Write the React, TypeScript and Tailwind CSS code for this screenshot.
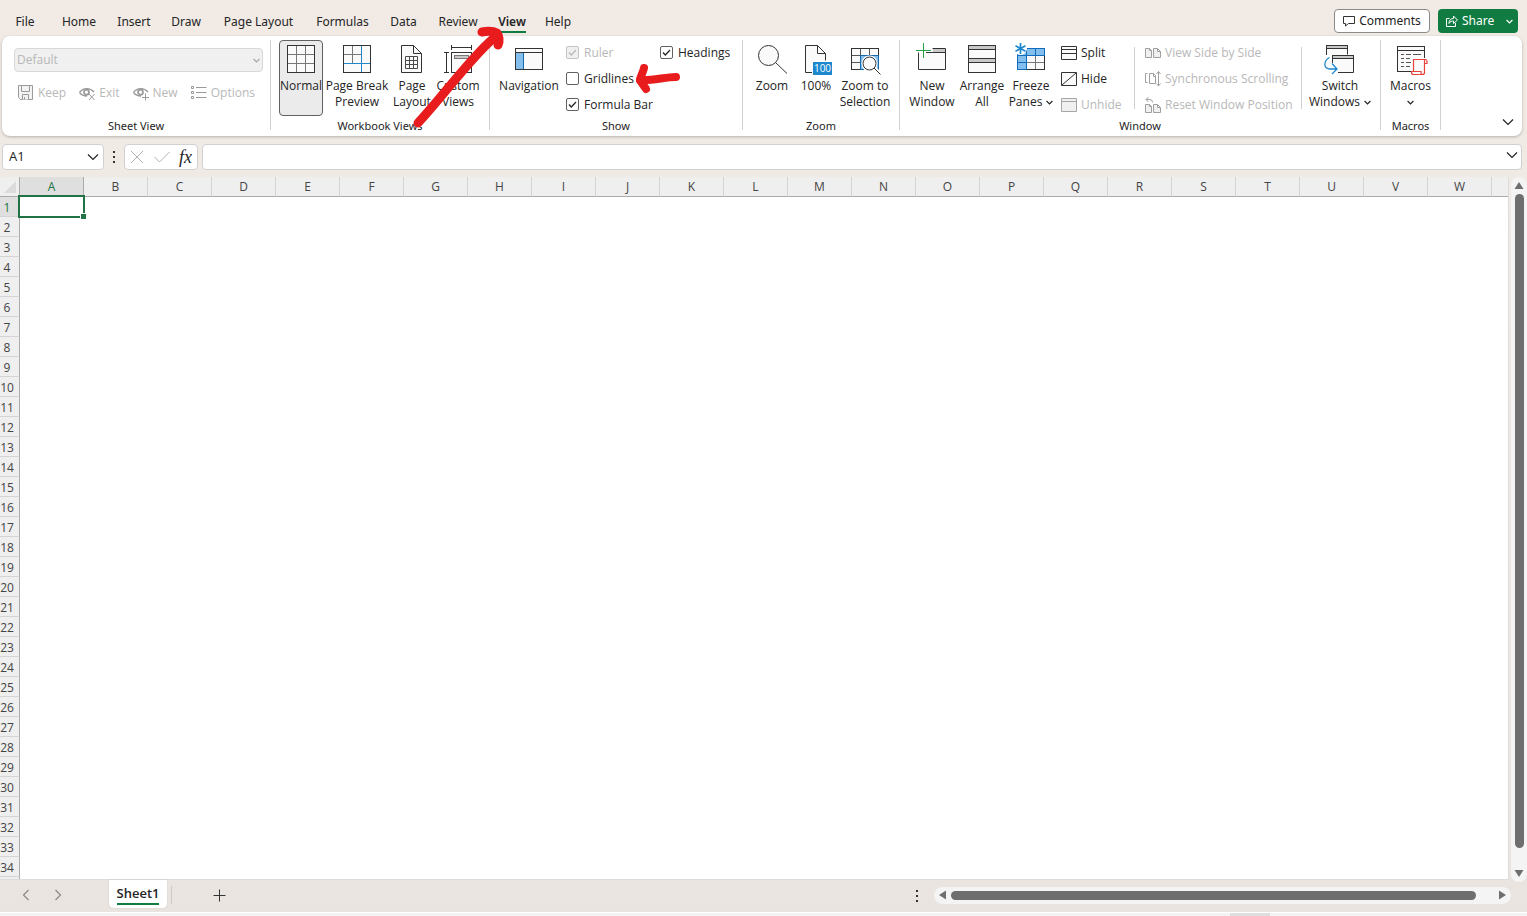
import React from "react";

type IconProps = { children: React.ReactNode; size?: number };

function Svg({ children, size = 32 }: IconProps) {
  return (
    <svg
      aria-hidden="true"
      className="block shrink-0 overflow-visible"
      width={size}
      height={size}
      viewBox={`0 0 ${size} ${size}`}
      fill="none"
      stroke="#333333"
    >
      {children}
    </svg>
  );
}

function Chevron({ width = 7, stroke = 1.2 }: { width?: number; stroke?: number }) {
  return (
    <svg
      aria-hidden="true"
      className="inline-block shrink-0"
      width={width}
      height={width}
      viewBox="0 0 12 12"
      fill="none"
      stroke="currentColor"
      strokeWidth={(stroke * 12) / width}
    >
      <path d="M1 3.5 6 8.5l5-5" />
    </svg>
  );
}

const NormalIcon = (
  <Svg>
    <rect x="2.5" y="2.5" width="27" height="27" fill="#fafafa" />
    <path d="M11.5 3v26M20.5 3v26M3 11.5h26M3 20.5h26" stroke="#777" />
    <rect x="2.5" y="2.5" width="27" height="27" />
  </Svg>
);
const PageBreakIcon = (
  <Svg>
    <rect x="2.5" y="2.5" width="27" height="27" fill="#fafafa" />
    <path d="M11.5 3v17M3 11.5h17" stroke="#777" />
    <path d="M20.5 3v26M3 20.5h26" stroke="#1f86c9" />
  </Svg>
);
const PageLayoutIcon = (
  <Svg>
    <path d="M5.5 2.5h12l8 8v19h-20z" fill="#fafafa" />
    <path d="M17.5 2.5v8h8" />
    <path d="M9.5 13.5h12v12h-12zM13.5 13.5v12M17.5 13.5v12M9.5 17.5h12M9.5 21.5h12" stroke="#4a4a4a" />
  </Svg>
);
const CustomViewsIcon = (
  <Svg>
    <rect x="9.5" y="9.5" width="20" height="20" fill="#fafafa" />
    <path d="M9.5 4.5h20M9.5 2v5M29.5 2v5M4.5 9.5v20M2 9.5h5M2 29.5h5" />
    <rect x="12.5" y="12.5" width="14" height="3" fill="#c8c8c8" stroke="#777" />
  </Svg>
);
const NavigationIcon = (
  <Svg>
    <rect x="2.5" y="5.5" width="27" height="21" fill="#fafafa" />
    <rect x="3" y="10" width="8" height="16" fill="#83beec" stroke="none" />
    <path d="M10.5 10v16" stroke="#1769aa" />
    <path d="M2.5 9.5h27M2.5 5.5h27v21h-27z" />
  </Svg>
);
const ZoomIcon = (
  <Svg>
    <circle cx="12.5" cy="12.5" r="10" fill="#fafafa" />
    <path d="m19.5 19.5 11.5 11" />
  </Svg>
);
const HundredIcon = (
  <Svg>
    <path d="M5.5 2.5h12l8 8v19h-20z" fill="#fafafa" stroke="none" />
    <path d="M12 29.5H5.5v-27h12l8 8v7M17.5 2.5v8h8" />
    <rect x="13" y="19" width="19" height="13" fill="#1e88cf" stroke="none" />
    <text x="22.5" y="29" textAnchor="middle" fontSize="10" fill="#fff" stroke="none">
      100
    </text>
  </Svg>
);
const ZoomSelectionIcon = (
  <Svg>
    <rect x="2.5" y="5.5" width="27" height="21" fill="#fafafa" />
    <path d="M11.5 5.5v21M20.5 5.5v7M2.5 12.5h9M2.5 19.5h9" stroke="#555" />
    <path d="M29.5 12.5v-7h-27v21h9" />
    <path d="M11.5 12.5h18v14h-18z" fill="#83beec" stroke="#1769aa" />
    <circle cx="20.5" cy="20.5" r="8" fill="#fff" stroke="none" />
    <path d="m25 25 7 7" stroke="#fff" strokeWidth="4" />
    <circle cx="20.5" cy="20.5" r="6.5" fill="#fafafa" />
    <path d="m25 25 6.5 6.5" />
  </Svg>
);
const NewWindowIcon = (
  <Svg>
    <rect x="3" y="10" width="26" height="16" fill="#fafafa" stroke="none" />
    <rect x="17" y="6" width="12" height="3" fill="#c8c8c8" stroke="none" />
    <path d="M2.5 9.5v17h27v-21H16.5M10 9.5h19.5" />
    <path d="M7.5 0v15M0 7.5h15" stroke="#fff" strokeWidth="3" />
    <path d="M7.5 0v15M0 7.5h15" stroke="#26a148" />
  </Svg>
);
const ArrangeIcon = (
  <Svg>
    <rect x="2.5" y="2.5" width="27" height="27" fill="#fafafa" />
    <rect x="2.5" y="2.5" width="27" height="4" fill="#c8c8c8" />
    <rect x="2.5" y="15.5" width="27" height="4" fill="#c8c8c8" />
  </Svg>
);
const FreezeIcon = (
  <Svg>
    <rect x="2.5" y="5.5" width="27" height="21" fill="#fafafa" />
    <path d="M20.5 12.5v14M12 19.5h17.5" stroke="#777" />
    <path d="M29.5 12.5v14h-18" />
    <path d="M2.5 5.5h27v7h-18v14h-9z" fill="#83beec" stroke="#0f6cbd" />
    <path d="M11.5 5.5v7M20.5 5.5v7M2.5 12.5h9M2.5 19.5h9" stroke="#0f6cbd" />
    <circle cx="5.5" cy="5.5" r="6.5" fill="#fff" stroke="none" />
    <path d="M5.5 0v11M.5 2.8l10 5.4M.5 8.200l10-5.4" stroke="#1e88cf" strokeWidth="1.7" />
  </Svg>
);
const SwitchIcon = (
  <Svg>
    <path d="M2.5 12V2.5h21v9" fill="#fafafa" />
    <rect x="2.5" y="2.5" width="21" height="3" fill="#c8c8c8" />
    <rect x="8.5" y="12.5" width="21" height="17" fill="#fafafa" stroke="none" />
    <path d="M8.5 20v-7.5h21v17H14" />
    <rect x="8.5" y="12.5" width="21" height="3" fill="#c8c8c8" />
    <path d="M5.5 14.5C-1 18-.5 26 6 26h6.5M8 20.5l5 5.5-5 5" stroke="#fff" strokeWidth="3" />
    <path d="M5.5 14.5C-1 18-.5 26 6 26h6.5M8 20.5l5 5.5-5 5" stroke="#1e88cf" strokeWidth="1.3" />
  </Svg>
);
const MacrosIcon = (
  <Svg>
    <rect x="2.5" y="3.5" width="27" height="25" fill="#fafafa" />
    <path d="M2.5 7.5h27" />
    <path
      d="M6 11.5h3M6 15.5h3M6 19.5h3M6 23.5h3M11 11.5h5M18 11.5h8M11 15.5h4M11 19.5h5M11 23.5h4"
      stroke="#555"
    />
    <rect x="16" y="15" width="16" height="17" fill="#fff" stroke="none" />
    <path
      d="M18.500 28.500v-12h12q1.500 0 1.500 2v2h-2.500v9q0 2-2 2h-9q-2 0-2-2v-1h9.500v1q0 2 1.500 2M29.500 20.500v-2.500q0-1.500 1-1.500"
      fill="#fafafa"
      stroke="#e8403a"
      strokeWidth="1.2"
    />
  </Svg>
);

const SaveIcon = (
  <Svg size={16}>
    <g stroke="#9a9a9a" fill="#f3f3f3">
      <path d="M.5.5h14v14h-12l-2-2z" />
      <path d="M3.5.5h8v6h-8zM4.500 14.500v-5h6v5M6.500 12v2.500" />
    </g>
  </Svg>
);
const Eye = ({ badge }: { badge: string }) => (
  <Svg size={16}>
    <g stroke="#9a9a9a">
      <path d="M.5 7.500C4.500 2.500 11 2.500 15 7M.5 7.500c2 2.500 4.500 3.500 7.500 3.500" strokeWidth="1.3" />
      <circle cx="7.500" cy="7.200" r="2.500" strokeWidth="1.7" />
      <path d={badge} />
    </g>
  </Svg>
);
const ListIcon = (
  <Svg size={16}>
    <path
      d="M.5 1.500h2v2h-2zM.5 6.500h2v2h-2zM.5 11.500h2v2h-2zM5 2.500h10.500M5 7.500h10.500M5 12.500h10.500"
      stroke="#9a9a9a"
    />
  </Svg>
);
const SplitIcon = (
  <Svg size={16}>
    <path d="M.5 1.500h15v13H.5z" fill="#fafafa" />
    <path d="M.5 4.500h15M.5 8.500h15" />
  </Svg>
);
const HideIcon = (
  <Svg size={16}>
    <path d="M.5 1.500h15v13H.5zM1 14 15 2" fill="#fafafa" />
  </Svg>
);
const UnhideIcon = (
  <Svg size={16}>
    <path d="M.5 1.500h15v13H.5zM.5 4.500h15" fill="#f0f0f0" stroke="#a6a6a6" />
  </Svg>
);
const SideIcon = (
  <Svg size={16}>
    <path
      d="M.5 3.500h4l2 2v7h-6zM8.500 3.500h4l3 3v6h-7zM12.500 3.500v3h3M4.500 3.500v2h2"
      fill="#f0f0f0"
      stroke="#a0a0a0"
    />
  </Svg>
);
const SyncIcon = (
  <Svg size={16}>
    <path
      d="M2.500 2.500h-2v9h2M4.500 2.500h4l2 2v8h-6zM8.500 2.500v3h2M13.500.5v14M11.500 3l2-2.500 2 2.500M11.500 12.500l2 2.500 2-2.500"
      stroke="#a0a0a0"
    />
  </Svg>
);
const ResetIcon = (
  <Svg size={16}>
    <path
      d="M.5 7.500h4l2 2v6h-6zM8.500 7.500h4l3 3v5h-7zM12.500 7.500v3h3M4.500 7.500v2h2"
      fill="#f0f0f0"
      stroke="#a0a0a0"
    />
    <path d="M3.500 0 1 2.500 3.500 5M1 2.500h4q2.500 0 2.500 3" stroke="#a0a0a0" />
  </Svg>
);

function BigButton({
  icon,
  lines,
  width,
  active = false,
  menu = false,
}: {
  icon: React.ReactNode;
  lines: string[];
  width: string;
  active?: boolean;
  menu?: boolean;
}) {
  return (
    <button
      type="button"
      aria-pressed={active}
      className={`flex h-[76px] shrink-0 flex-col items-center rounded border pt-[2px] text-xs leading-4 ${width} ${
        active ? "border-[#616161] bg-[#ebebeb]" : "border-transparent"
      }`}
    >
      {icon}
      <span className="mt-[3px] flex flex-col items-center whitespace-nowrap">
        {lines.map((line, i) => (
          <span key={line} className="flex items-center gap-1">
            {line}
            {menu && i === lines.length - 1 && i > 0 && <Chevron />}
          </span>
        ))}
        {menu && lines.length === 1 && (
          <span className="flex h-4 items-center">
            <Chevron />
          </span>
        )}
      </span>
    </button>
  );
}

function SmallButton({ icon, label, disabled = false }: { icon: React.ReactNode; label: string; disabled?: boolean }) {
  return (
    <button
      type="button"
      disabled={disabled}
      className={`flex h-[26px] items-center gap-1 whitespace-nowrap text-xs ${disabled ? "text-[#b8b8b8]" : ""}`}
    >
      {icon}
      {label}
    </button>
  );
}

function Check({
  id,
  label,
  checked = false,
  disabled = false,
}: {
  id: string;
  label: string;
  checked?: boolean;
  disabled?: boolean;
}) {
  return (
    <div className={`flex h-[26px] items-center gap-[5px] text-xs ${disabled ? "text-[#b8b8b8]" : ""}`}>
      <span className="relative mb-[2px] flex size-[13px]">
        <input
          id={id}
          type="checkbox"
          defaultChecked={checked}
          disabled={disabled}
          className="peer size-[13px] appearance-none rounded-[2px] border border-[#616161] bg-white disabled:border-[#c4c4c4] disabled:bg-[#f0f0f0]"
        />
        <svg
          aria-hidden="true"
          className="pointer-events-none absolute inset-0 hidden peer-checked:block"
          viewBox="0 0 13 13"
          fill="none"
          stroke="currentColor"
          strokeWidth="1.2"
        >
          <path d="m3 6.5 2.3 2.5L10 4" />
        </svg>
      </span>
      <label htmlFor={id} className="whitespace-nowrap">
        {label}
      </label>
    </div>
  );
}

function Group({ label, width, children }: { label: string; width: string; children: React.ReactNode }) {
  return (
    <section aria-label={label} className={`flex h-[90px] shrink-0 flex-col border-r border-[#d1d1d1] ${width}`}>
      <div className="flex min-h-0 flex-1">{children}</div>
      <div className="h-3 text-center font-['Noto_Sans',sans-serif] text-[11px] leading-4">{label}</div>
    </section>
  );
}

const tabs: [string, string][] = [
  ["File", "w-[50px]"],
  ["Home", "w-[58px]"],
  ["Insert", "w-[52px]"],
  ["Draw", "w-[52px]"],
  ["Page Layout", "w-[93px]"],
  ["Formulas", "w-[75px]"],
  ["Data", "w-[47px]"],
  ["Review", "w-[62px]"],
  ["View", "w-[46px]"],
  ["Help", "w-[46px]"],
];

function TabBar() {
  return (
    <header className="flex h-9 shrink-0 items-center justify-between pt-[6px] pr-[9px] font-['Noto_Sans',sans-serif]">
      <nav className="flex h-full text-xs">
        {tabs.map(([name, width]) => (
          <button key={name} type="button" className={`flex shrink-0 justify-center whitespace-nowrap pt-[6px] ${width}`}>
            <span
              className={`h-[21px] leading-5 ${name === "View" ? "border-b-2 border-[#107c41] font-semibold" : ""}`}
            >
              {name}
            </span>
          </button>
        ))}
      </nav>
      <div className="flex gap-2 text-xs">
        <button
          type="button"
          className="flex h-6 w-24 items-center justify-center gap-1 rounded border border-[#8a8a8a] bg-white"
        >
          <Svg size={12}>
            <path d="M.5 1.500h11v7h-6l-3 2.500V8.500h-2z" />
          </Svg>
          Comments
        </button>
        <button type="button" className="flex h-6 w-20 items-center gap-1 rounded bg-[#107c41] pl-2 text-white">
          <Svg size={12}>
            <path
              d="M3.500 3.500h-3v8h9V8M3 8.500C3 5 5 3.500 7.500 3.500V1L11.500 5l-4 3.500v-2.500C5.500 6 4 6.500 3 8.500z"
              stroke="#fff"
            />
          </Svg>
          Share
          <span className="ml-auto flex pr-[5px]">
            <Chevron />
          </span>
        </button>
      </div>
    </header>
  );
}

function Ribbon() {
  return (
    <div className="mr-[5px] ml-[2px] flex h-[100px] shrink-0 items-start rounded-lg bg-white pt-1 shadow-[0_1px_3px_rgba(0,0,0,0.25)]">
      <Group label="Sheet View" width="w-[269px]">
        <div className="flex flex-1 flex-col pt-2 pr-[7px] pl-3">
          <div className="relative flex">
            <select
              aria-label="Sheet view"
              disabled
              className="h-6 w-full appearance-none rounded border border-[#d8d8d8] bg-[#f0f0f0] px-[2px] text-xs text-[#b8b8b8] opacity-100"
            >
              <option>Default</option>
            </select>
            <span className="pointer-events-none absolute inset-y-0 right-[3px] flex items-center text-[#a6a6a6]">
              <Chevron />
            </span>
          </div>
          <div className="mt-2 flex justify-between pr-2 pl-1">
            <SmallButton disabled label="Keep" icon={SaveIcon} />
            <SmallButton disabled label="Exit" icon={<Eye badge="m10 9 5.500 6M15.500 9 10 15" />} />
            <SmallButton disabled label="New" icon={<Eye badge="M12.500 8.500v7M9 12.500h7" />} />
            <SmallButton disabled label="Options" icon={ListIcon} />
          </div>
        </div>
      </Group>
      <Group label="Workbook Views" width="w-[219px]">
        <div className="flex pl-2">
          <BigButton active width="w-11" icon={NormalIcon} lines={["Normal"]} />
          <BigButton width="w-[68px]" icon={PageBreakIcon} lines={["Page Break", "Preview"]} />
          <BigButton width="w-[42px]" icon={PageLayoutIcon} lines={["Page", "Layout"]} />
          <BigButton width="w-[50px]" icon={CustomViewsIcon} lines={["Custom", "Views"]} />
        </div>
      </Group>
      <Group label="Show" width="w-[253px]">
        <div className="flex pl-[7px]">
          <BigButton width="w-16" icon={NavigationIcon} lines={["Navigation"]} />
          <div className="ml-[5px] w-[94px]">
            <Check id="ruler" label="Ruler" checked disabled />
            <Check id="gridlines" label="Gridlines" />
            <Check id="formula-bar" label="Formula Bar" checked />
          </div>
          <Check id="headings" label="Headings" checked />
        </div>
      </Group>
      <Group label="Zoom" width="w-[157px]">
        <div className="flex pl-[7px]">
          <BigButton width="w-11" icon={ZoomIcon} lines={["Zoom"]} />
          <BigButton width="w-11" icon={HundredIcon} lines={["100%"]} />
          <BigButton width="w-[54px]" icon={ZoomSelectionIcon} lines={["Zoom to", "Selection"]} />
        </div>
      </Group>
      <Group label="Window" width="w-[481px]">
        <div className="flex items-start pl-[7px]">
          <BigButton width="w-[50px]" icon={NewWindowIcon} lines={["New", "Window"]} />
          <BigButton width="w-[50px]" icon={ArrangeIcon} lines={["Arrange", "All"]} />
          <BigButton width="w-12" icon={FreezeIcon} lines={["Freeze", "Panes"]} menu />
          <div className="ml-[6px] w-[73px]">
            <SmallButton label="Split" icon={SplitIcon} />
            <SmallButton label="Hide" icon={HideIcon} />
            <SmallButton disabled label="Unhide" icon={UnhideIcon} />
          </div>
          <div className="mt-[7px] h-[62px] border-l border-[#d1d1d1]" />
          <div className="ml-[10px] w-[156px]">
            <SmallButton disabled label="View Side by Side" icon={SideIcon} />
            <SmallButton disabled label="Synchronous Scrolling" icon={SyncIcon} />
            <SmallButton disabled label="Reset Window Position" icon={ResetIcon} />
          </div>
          <div className="mt-[7px] h-[62px] border-l border-[#d1d1d1]" />
          <div className="ml-[5px]">
            <BigButton width="w-[66px]" icon={SwitchIcon} lines={["Switch", "Windows"]} menu />
          </div>
        </div>
      </Group>
      <Group label="Macros" width="w-[60px]">
        <div className="flex flex-1 justify-center">
          <BigButton width="w-[50px]" icon={MacrosIcon} lines={["Macros"]} menu />
        </div>
      </Group>
      <button type="button" aria-label="Collapse ribbon" className="mr-2 mb-2 ml-auto flex self-end">
        <Chevron width={12} />
      </button>
    </div>
  );
}

function FormulaBar() {
  return (
    <div className="flex h-[41px] shrink-0 items-center pr-[5px] pl-[2px]">
      <div className="relative flex h-[26px] w-[102px] items-center rounded border border-[#d1d1d1] bg-white">
        <input aria-label="Name box" defaultValue="A1" className="w-full bg-transparent pl-[6px] text-[13px] outline-none" />
        <span className="pointer-events-none absolute right-1 flex">
          <Chevron width={12} />
        </span>
      </div>
      <div className="flex w-5 flex-col items-center gap-[3px]">
        <span className="size-[2px] bg-[#333]" />
        <span className="size-[2px] bg-[#333]" />
        <span className="size-[2px] bg-[#333]" />
      </div>
      <div className="mr-1 flex h-[26px] w-[74px] items-center justify-between rounded border border-[#d1d1d1] bg-white px-[5px]">
        <button type="button" aria-label="Cancel">
          <Svg size={14}>
            <path d="m1 1 12 12M13 1 1 13" stroke="#b0b0b0" />
          </Svg>
        </button>
        <button type="button" aria-label="Enter">
          <Svg size={16}>
            <path d="m.5 8 5 5L15.500 3" stroke="#b0b0b0" />
          </Svg>
        </button>
        <button
          type="button"
          aria-label="Insert function"
          className="font-['Liberation_Serif',serif] text-lg leading-5 italic"
        >
          fx
        </button>
      </div>
      <div className="relative flex h-[26px] flex-1 items-center rounded border border-[#d1d1d1] bg-white">
        <input aria-label="Formula bar" className="w-full bg-transparent px-2 text-xs outline-none" />
        <span className="pointer-events-none absolute right-[3px] flex pb-1">
          <Chevron width={12} />
        </span>
      </div>
    </div>
  );
}

const columns = "ABCDEFGHIJKLMNOPQRSTUVW".split("");
const rows = Array.from({ length: 34 }, (_, i) => i + 1);

function Sheet() {
  return (
    <div className="flex min-h-0 flex-1">
      <div className="flex min-w-0 flex-1 flex-col overflow-hidden border-r border-b border-[#dcdcdc] bg-white">
        <table className="w-full table-fixed border-separate border-spacing-0 text-xs text-[#444]">
          <colgroup>
            <col className="w-5" />
            {columns.map((c) => (
              <col key={c} className="w-16" />
            ))}
            <col />
          </colgroup>
          <thead>
            <tr className="h-5 bg-[#efefef]">
              <td className="border-r border-b border-[#ababab] p-0">
                <svg aria-hidden="true" className="ml-1 block" width="12" height="12" viewBox="0 0 12 12">
                  <path d="M12 0v12H0z" fill="#dcdcdc" />
                </svg>
              </td>
              {columns.map((c) => (
                <th
                  key={c}
                  scope="col"
                  className={`h-5 border-r border-b p-0 text-center leading-[18px] font-normal ${
                    c === "A"
                      ? "border-[#ababab] bg-[#dfdfdf] text-[#217346]"
                      : "border-r-[#d4d4d4] border-b-[#ababab]"
                  }`}
                >
                  {c}
                </th>
              ))}
              <td className="border-b border-[#ababab] p-0" />
            </tr>
          </thead>
          <tbody>
            {rows.map((r) => (
              <tr key={r} className="h-5">
                <th
                  scope="row"
                  className={`h-5 border-r border-b border-r-[#ababab] border-b-[#d4d4d4] p-0 pt-[3px] pr-[5px] leading-4 font-normal ${
                    r === 1 ? "bg-[#dfdfdf] text-[#217346]" : "bg-[#efefef]"
                  }`}
                >
                  <span className="flex justify-center">{r}</span>
                </th>
                {columns.map((c) => (
                  <td key={c} className="relative p-0">
                    {r === 1 && c === "A" && (
                      <span className="absolute -top-[2px] -right-px -bottom-px -left-[2px] border-2 border-[#217346]">
                        <span className="absolute -right-[3px] -bottom-[3px] size-[6px] border-t border-l border-white bg-[#217346]" />
                      </span>
                    )}
                  </td>
                ))}
                <td className="p-0" />
              </tr>
            ))}
          </tbody>
        </table>
        <div className="w-5 flex-1 border-r border-[#ababab] bg-[#efefef]" />
      </div>
      <div className="-mb-[2px] ml-[2px] flex w-4 flex-col items-center rounded-lg bg-[#f4f4f4] py-[5px]">
        <svg aria-hidden="true" width="10" height="7" viewBox="0 0 10 7" fill="#6e6e6e">
          <path d="M5 0 9.500 7h-9z" />
        </svg>
        <div className="mt-[5px] mb-[22px] w-[9px] flex-1 rounded-full bg-[#6e6e6e]" />
        <svg aria-hidden="true" width="10" height="7" viewBox="0 0 10 7" fill="#6e6e6e">
          <path d="M5 7 9.500 0h-9z" />
        </svg>
      </div>
    </div>
  );
}

function SheetTabs() {
  return (
    <footer className="shrink-0">
      <div className="flex h-8 items-center pr-4 pb-[2px]">
        <button type="button" aria-label="Previous sheet" className="ml-5 flex rotate-90 text-[#8a8a8a]">
          <Chevron width={12} />
        </button>
        <button type="button" aria-label="Next sheet" className="ml-5 flex -rotate-90 text-[#8a8a8a]">
          <Chevron width={12} />
        </button>
        <button
          type="button"
          className="ml-[45px] flex h-7 w-[58px] shrink-0 justify-center self-start rounded-b bg-white pt-1 text-[13px] leading-[18px] font-semibold shadow-[0_0_1px_rgba(0,0,0,0.3)]"
        >
          <span className="h-[21px] border-b-2 border-[#107c41]">Sheet1</span>
        </button>
        <div className="ml-1 h-[18px] border-l border-[#cfcac7]" />
        <button type="button" aria-label="New sheet" className="ml-[41px]">
          <Svg size={12}>
            <path d="M6.500.5v12M.5 6.500h12" />
          </Svg>
        </button>
        <div className="mr-4 ml-auto flex flex-col gap-[3px] pt-[2px]">
          <span className="size-[2px] bg-[#333]" />
          <span className="size-[2px] bg-[#333]" />
          <span className="size-[2px] bg-[#333]" />
        </div>
        <div className="flex h-[17px] w-[577px] items-center rounded-full bg-[#f4f4f4] px-[5px]">
          <svg aria-hidden="true" width="7" height="10" viewBox="0 0 7 10" fill="#6e6e6e">
            <path d="M0 5 7 .5v9z" />
          </svg>
          <div className="mr-[23px] ml-[5px] h-[9px] flex-1 rounded-full bg-[#6e6e6e]" />
          <svg aria-hidden="true" width="7" height="10" viewBox="0 0 7 10" fill="#6e6e6e">
            <path d="M7 5 0 .5v9z" />
          </svg>
        </div>
      </div>
      <div className="flex h-1 justify-end border-t border-white bg-[#f3f3f3] pr-[257px]">
        <div className="w-10 bg-[#dedede]" />
      </div>
    </footer>
  );
}

function Annotations() {
  return (
    <svg
      aria-hidden="true"
      className="pointer-events-none absolute top-0 left-0"
      width="700"
      height="140"
      viewBox="0 0 700 140"
      fill="none"
      stroke="#e81c1c"
      strokeLinecap="round"
      strokeLinejoin="round"
    >
      <path d="M418 123C434 106 450 85 466 67 475 57 484 46 494 38" strokeWidth="9" />
      <path d="M482 32C487 31 493 31 497 33 499 36 500 41 498 45" strokeWidth="9" />
      <path d="M676 77C665 77 652 81 640 80" strokeWidth="8" />
      <path d="M644 68C643 73 640 77 640 80 642 84 645 87 646 89" strokeWidth="8" />
    </svg>
  );
}

export default function App() {
  return (
    <div className="relative flex h-screen flex-col overflow-hidden bg-linear-to-b from-[#f2ebe5] via-[#ede8e3] to-[#e9e4e0] font-['Open_Sans','Noto_Sans',sans-serif] text-[#242424]">
      <TabBar />
      <Ribbon />
      <FormulaBar />
      <Sheet />
      <SheetTabs />
      <Annotations />
    </div>
  );
}
